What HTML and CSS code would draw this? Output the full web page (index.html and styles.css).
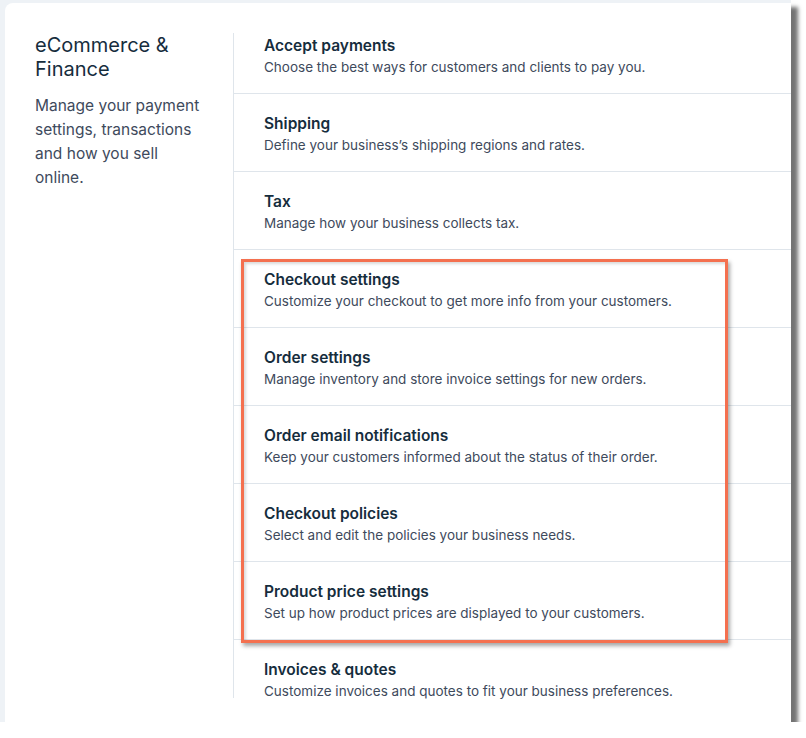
FILE: index.html
```html
<!DOCTYPE html>
<html lang="en">
  <head>
    <meta charset="UTF-8" />
    <title>eCommerce &amp; Finance</title>
    <link rel="stylesheet" href="styles.css">
  </head>
  <body>
    <div class="shot">
      <div class="card">
        <div class="intro">
          <h2>eCommerce &amp; Finance</h2>
          <p>Manage your payment settings, transactions and how you sell online.</p>
        </div>

        <div class="settings-list">
          <div class="setting-row first-row">
            <div class="setting-title">Accept payments</div>
            <div class="setting-desc">Choose the best ways for customers and clients to pay you.</div>
          </div>
          <div class="setting-row">
            <div class="setting-title">Shipping</div>
            <div class="setting-desc">Define your business’s shipping regions and rates.</div>
          </div>
          <div class="setting-row">
            <div class="setting-title">Tax</div>
            <div class="setting-desc">Manage how your business collects tax.</div>
          </div>
          <div class="setting-row">
            <div class="setting-title">Checkout settings</div>
            <div class="setting-desc">Customize your checkout to get more info from your customers.</div>
          </div>
          <div class="setting-row">
            <div class="setting-title">Order settings</div>
            <div class="setting-desc">Manage inventory and store invoice settings for new orders.</div>
          </div>
          <div class="setting-row">
            <div class="setting-title">Order email notifications</div>
            <div class="setting-desc">Keep your customers informed about the status of their order.</div>
          </div>
          <div class="setting-row">
            <div class="setting-title">Checkout policies</div>
            <div class="setting-desc">Select and edit the policies your business needs.</div>
          </div>
          <div class="setting-row">
            <div class="setting-title">Product price settings</div>
            <div class="setting-desc">Set up how product prices are displayed to your customers.</div>
          </div>
          <div class="setting-row last-row">
            <div class="setting-title">Invoices &amp; quotes</div>
            <div class="setting-desc">Customize invoices and quotes to fit your business preferences.</div>
          </div>

          <!-- highlight around the store settings -->
          <div class="highlight"></div>
        </div>
      </div>
    </div>
  </body>
</html>
```

FILE: styles.css
```css
body {
  margin: 0;
  padding: 0;
  background: #fff;
  font-family: "Inter", "Noto Sans", sans-serif;
  color: #162d3d;
}

.shot {
  width: 791px;
  height: 722px;
  background: #eef2f6;
  box-shadow: 7px 7px 4px rgba(0, 0, 0, 0.55);
  display: flex;
  flex-direction: column;
}

.card {
  flex: 1;
  margin: 3px 0 0 5px;
  background: #fff;
  border-top-left-radius: 8px;
  display: flex;
  align-items: flex-start;
  padding-top: 30px;
  overflow: hidden;
}

.intro {
  width: 228px;
  padding: 0 30px 0 30px;
  box-sizing: border-box;
  flex-shrink: 0;
}

.intro h2 {
  margin: 0;
  font-size: 20px;
  line-height: 24px;
  font-weight: 400;
  color: #162d3d;
}

.intro p {
  margin: 13px 0 0;
  font-size: 15.5px;
  line-height: 24px;
  color: #3e4a5c;
}

.settings-list {
  flex: 1;
  position: relative;
  border-left: 1px solid #dfe5eb;
}

.setting-row {
  padding: 19px 30px 16px;
  border-bottom: 1px solid #dfe5eb;
}

.setting-row.first-row {
  padding-top: 2px;
}

.setting-row.last-row {
  border-bottom: none;
  padding-bottom: 0;
  height: 39px;
}

.setting-title {
  font-size: 15.5px;
  line-height: 22px;
  font-weight: 600;
  color: #162d3d;
}

.setting-desc {
  font-size: 13.5px;
  line-height: 20px;
  color: #3e4a5c;
}

.highlight {
  position: absolute;
  left: 7px;
  top: 226px;
  width: 481px;
  height: 378px;
  border: 3px solid #f4704f;
  box-shadow: 2px 3px 4px rgba(0, 0, 0, 0.35), inset 2px 2px 3px rgba(0, 0, 0, 0.15);
}
```
